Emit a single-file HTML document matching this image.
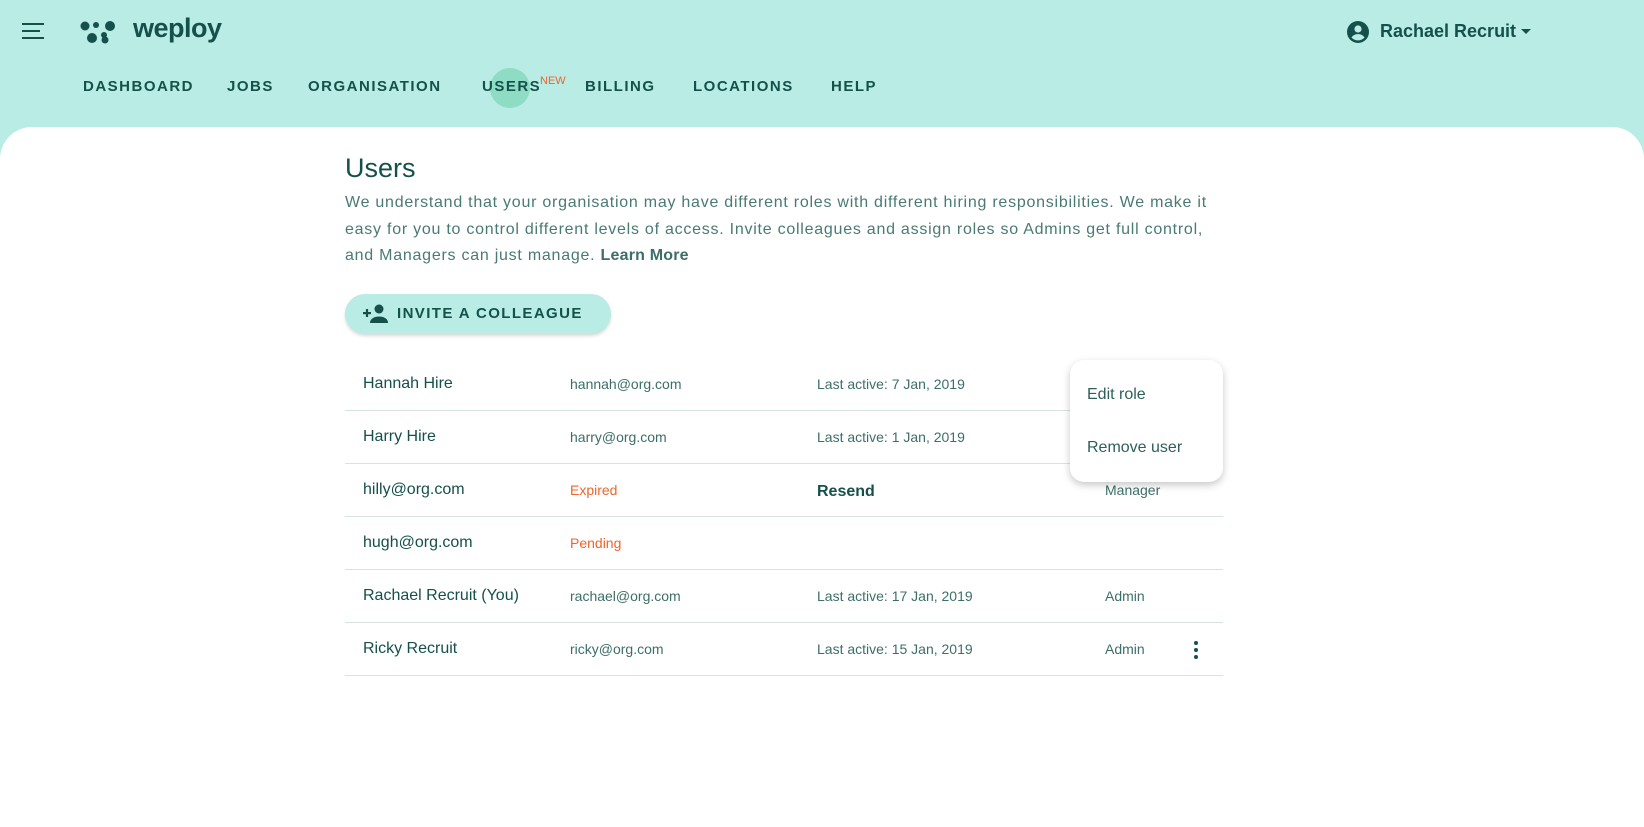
<!DOCTYPE html>
<html><head><style>
*{margin:0;padding:0;box-sizing:border-box}
body{width:1644px;height:795px;background:#b8ece5;font-family:"Liberation Sans",sans-serif;color:#15504a;position:relative;overflow:hidden}
.abs{position:absolute}
.nav{position:absolute;top:78px;font-weight:bold;font-size:15px;letter-spacing:1.5px;color:#15504a}
.panel{position:absolute;left:0;top:127px;width:1644px;height:700px;background:#fff;border-radius:32px 32px 0 0}
.row{position:absolute;left:345px;width:878px;height:53px;border-bottom:1px solid #d8e2e0;font-size:14px;color:#3d6e68}
.row span{position:absolute;top:18px}
.row .n{left:18px;font-size:16px;color:#15504a;top:17px}
.row .e{left:225px}
.row .d{left:472px}
.row .r{left:760px}
</style></head><body>
<div class="abs" style="left:22px;top:23px;width:22px;height:2px;background:#15504a"></div>
<div class="abs" style="left:22px;top:30px;width:18px;height:2px;background:#15504a"></div>
<div class="abs" style="left:22px;top:37px;width:22px;height:2px;background:#15504a"></div>
<svg class="abs" style="left:80px;top:20px" width="40" height="24"><g fill="#15504a"><circle cx="5" cy="6" r="4.5"/><circle cx="16" cy="5" r="3"/><circle cx="30" cy="6" r="5"/><circle cx="12" cy="18" r="5"/><circle cx="24" cy="15" r="3"/><circle cx="25" cy="20" r="3.5"/></g></svg>
<div class="abs" style="left:133px;top:13px;font-size:27px;font-weight:bold;color:#15504a;letter-spacing:-0.5px">weploy</div>
<svg class="abs" style="left:1346px;top:20px" width="24" height="24" viewBox="0 0 24 24"><circle cx="12" cy="12" r="11" fill="#15504a"/><circle cx="12" cy="9" r="3.6" fill="#b8ece5"/><path d="M5.5 17.5c1.5-2.5 4-3.4 6.5-3.4s5 .9 6.5 3.4c-1.6 1.8-3.9 2.9-6.5 2.9s-4.9-1.1-6.5-2.9z" fill="#b8ece5"/></svg>
<div class="abs" style="left:1380px;top:21px;font-size:18px;font-weight:bold;color:#15504a">Rachael Recruit</div>
<div class="abs" style="left:1521px;top:29px;border:5px solid transparent;border-top-color:#15504a;border-bottom:0"></div>
<div class="abs" style="left:490px;top:68px;width:40px;height:40px;border-radius:50%;background:#8fdcc5"></div>
<div class="nav" style="left:83px">DASHBOARD</div>
<div class="nav" style="left:227px">JOBS</div>
<div class="nav" style="left:308px">ORGANISATION</div>
<div class="nav" style="left:482px">USERS</div>
<div class="abs" style="left:540px;top:75px;font-size:11px;color:#f0642a">NEW</div>
<div class="nav" style="left:585px">BILLING</div>
<div class="nav" style="left:693px">LOCATIONS</div>
<div class="nav" style="left:831px">HELP</div>
<div class="panel"></div>
<div class="abs" style="left:345px;top:153px;font-size:27px;color:#15504a">Users</div>
<div class="abs" style="left:345px;top:190px;width:880px;font-size:16px;line-height:26.5px;color:#4a7a74;letter-spacing:0.75px">We understand that your organisation may have different roles with different hiring responsibilities. We make it easy for you to control different levels of access. Invite colleagues and assign roles so Admins get full control, and Managers can just manage. <b style="color:#3d6e68;letter-spacing:0.2px">Learn More</b></div>
<div class="abs" style="left:345px;top:294px;width:266px;height:40px;border-radius:20px;background:#b8ece5;box-shadow:0 2px 3px rgba(0,0,0,0.15)"></div>
<svg class="abs" style="left:363px;top:303px" width="26" height="22" viewBox="0 0 26 22"><g fill="#15504a"><circle cx="16" cy="6" r="4.5"/><path d="M7 20c0-4.5 4.5-6.5 9-6.5s9 2 9 6.5z"/><rect x="0" y="9" width="8" height="2.2"/><rect x="2.9" y="6" width="2.2" height="8"/></g></svg>
<div class="abs" style="left:397px;top:305px;font-size:15px;font-weight:bold;letter-spacing:1.4px;color:#15504a">INVITE A COLLEAGUE</div>
<div class="row" style="top:358px"><span class="n">Hannah Hire</span><span class="e">hannah@org.com</span><span class="d">Last active: 7 Jan, 2019</span></div>
<div class="row" style="top:411px"><span class="n">Harry Hire</span><span class="e">harry@org.com</span><span class="d">Last active: 1 Jan, 2019</span></div>
<div class="row" style="top:464px"><span class="n">hilly@org.com</span><span class="e" style="color:#f0642a">Expired</span><span class="d" style="font-weight:bold;color:#15504a;font-size:16px;top:19px">Resend</span><span class="r">Manager</span></div>
<div class="row" style="top:517px"><span class="n">hugh@org.com</span><span class="e" style="color:#f0642a">Pending</span></div>
<div class="row" style="top:570px"><span class="n">Rachael Recruit (You)</span><span class="e">rachael@org.com</span><span class="d">Last active: 17 Jan, 2019</span><span class="r">Admin</span></div>
<div class="row" style="top:623px"><span class="n">Ricky Recruit</span><span class="e">ricky@org.com</span><span class="d">Last active: 15 Jan, 2019</span><span class="r">Admin</span></div>
<svg class="abs" style="left:1192px;top:640px" width="8" height="20"><g fill="#15504a"><circle cx="4" cy="3" r="2"/><circle cx="4" cy="10" r="2"/><circle cx="4" cy="17" r="2"/></g></svg>
<div class="abs" style="left:1070px;top:360px;width:153px;height:122px;background:#fff;border-radius:14px;box-shadow:0 3px 8px rgba(0,0,0,0.22)"></div>
<div class="abs" style="left:1087px;top:386px;font-size:16px;color:#2f5f59">Edit role</div>
<div class="abs" style="left:1087px;top:439px;font-size:16px;color:#2f5f59">Remove user</div>
</body></html>
